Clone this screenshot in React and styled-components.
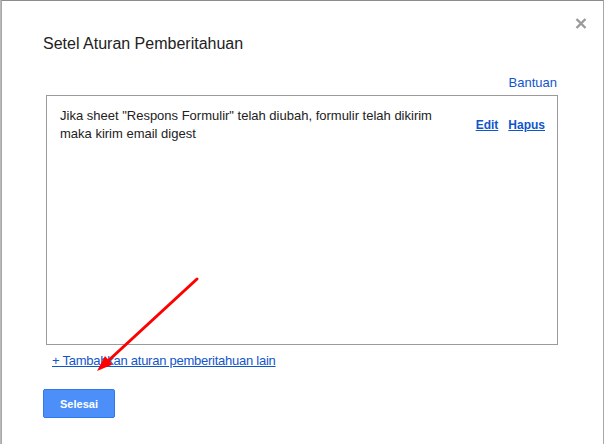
import React from "react";
import styled, { createGlobalStyle } from "styled-components";

const GlobalStyle = createGlobalStyle`
  html, body {
    margin: 0;
    padding: 0;
    background: #ffffff;
  }
  body {
    font-family: Arial, "Liberation Sans", sans-serif;
    color: #222;
  }
`;

const Page = styled.div`
  position: relative;
  width: 604px;
  height: 444px;
  display: flex;
  background: #b8b8b8;
  overflow: hidden;
`;

const Dialog = styled.div`
  flex: 1;
  margin-left: 1px;
  background: #fff;
  border-top: 1px solid #8c8c8c;
  border-left: 1px solid #a8a8a8;
  border-right: 1px solid #a8a8a8;
  padding: 33px 0 0 41px;
  display: flex;
  flex-direction: column;
  align-items: flex-start;
`;

const Title = styled.div`
  font-size: 16px;
  line-height: 20px;
  color: #222;
`;

const CloseBtn = styled.svg`
  position: absolute;
  top: 18px;
  left: 575px;
  cursor: pointer;
`;

const HelpRow = styled.div`
  align-self: stretch;
  display: flex;
  justify-content: flex-end;
  margin-top: 21px;
  padding-right: 46px;
`;

const Link = styled.a`
  font-size: 13px;
  line-height: 15px;
  color: #1155cc;
  text-decoration: ${(p) => (p.$underline ? "underline" : "none")};
  font-weight: ${(p) => (p.$bold ? "bold" : "normal")};
  letter-spacing: ${(p) => p.$tight || "normal"};
  cursor: pointer;
`;

const RulesBox = styled.div`
  margin: 5px 0 0 3px;
  width: 512px;
  height: 250px;
  border: 1px solid #9b9b9b;
  padding: 11px 12px 0 13px;
  box-sizing: border-box;
`;

const Rule = styled.div`
  display: flex;
  align-items: center;
  justify-content: space-between;
`;

const RuleText = styled.div`
  font-size: 13px;
  line-height: 18px;
  color: #222;
`;

const RuleActions = styled.div`
  display: flex;
  gap: 10px;
`;

const ActionLink = styled(Link)`
  font-size: 12px;
  line-height: 14px;
`;

const AddRow = styled.div`
  margin: 6px 0 0 9px;
`;

const DoneButton = styled.button`
  margin-top: 20px;
  width: 72px;
  height: 29px;
  border: 1px solid #3079ed;
  border-radius: 2px;
  background: #4d8ff9;
  color: #fff;
  font-family: Arial, "Liberation Sans", sans-serif;
  font-size: 11px;
  font-weight: bold;
  padding: 0;
  cursor: pointer;
`;

const ArrowLayer = styled.svg`
  position: absolute;
  left: 0;
  top: 0;
  pointer-events: none;
`;

export default function App() {
  return (
    <>
      <GlobalStyle />
      <Page>
        <Dialog>
          <Title>Setel Aturan Pemberitahuan</Title>
          <HelpRow>
            <Link>Bantuan</Link>
          </HelpRow>
          <RulesBox>
            <Rule>
              <RuleText>
                Jika sheet "Respons Formulir" telah diubah, formulir telah dikirim
                <br />
                maka kirim email digest
              </RuleText>
              <RuleActions>
                <ActionLink $bold $underline>Edit</ActionLink>
                <ActionLink $bold $underline>Hapus</ActionLink>
              </RuleActions>
            </Rule>
          </RulesBox>
          <AddRow>
            <Link $underline $tight="-0.25px">+ Tambahkan aturan pemberitahuan lain</Link>
          </AddRow>
          <DoneButton>Selesai</DoneButton>
        </Dialog>
        <CloseBtn width="12" height="11" viewBox="0 0 12 11">
          <path d="M1.5 1 L10.5 10 M10.5 1 L1.5 10" stroke="#9a9a9a" strokeWidth="2.4" />
        </CloseBtn>
        <ArrowLayer width="604" height="444" viewBox="0 0 604 444">
          <line x1="197" y1="279" x2="108" y2="361" stroke="#f00" strokeWidth="3" strokeLinecap="round" />
          <polygon points="97,371 112.5,364.5 105,356" fill="#f00" />
        </ArrowLayer>
      </Page>
    </>
  );
}
